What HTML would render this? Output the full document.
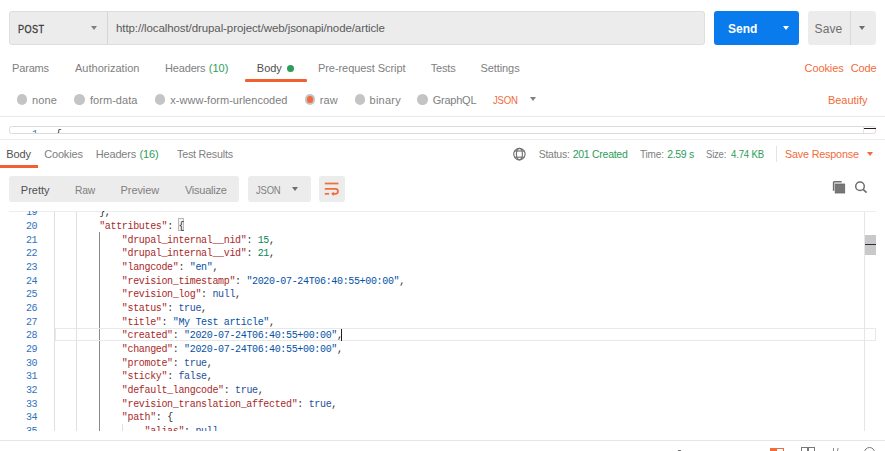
<!DOCTYPE html>
<html><head><meta charset="utf-8"><style>
*{box-sizing:border-box}
html,body{margin:0;padding:0}
body{width:885px;height:451px;overflow:hidden;background:#fff;position:relative;font-family:"Liberation Sans",sans-serif}
.tx{position:absolute;white-space:pre}
.a{position:absolute}
.tri{position:absolute;width:0;height:0;border-left:3.5px solid transparent;border-right:3.5px solid transparent;border-top:4px solid #808080}
.rad{position:absolute;width:10.6px;height:10.6px;border-radius:50%;background:#C3C4C5;top:94.1px}
.ln{position:absolute;width:50px;text-align:right;font:10px/10px "Liberation Mono",monospace;letter-spacing:-0.34px;color:#2F72C0;white-space:pre}
.cl{position:absolute;font:10px/10px "Liberation Mono",monospace;letter-spacing:-0.34px;color:#333;white-space:pre}
.hl{position:absolute;background:#E9E9E9}
</style></head><body>

<!-- request bar -->
<div class="a" style="left:9px;top:11px;width:696px;height:34px;background:#ECECEC;border:1px solid #DEDEDE;border-radius:3px"></div>
<div class="a" style="left:107px;top:12px;width:1px;height:32px;background:#D6D6D6"></div>
<div class="tri" style="left:90.8px;top:26.4px"></div>
<div class="a" style="left:714px;top:11px;width:85px;height:34px;background:#097BED;border-radius:3px"></div>
<div class="tri" style="left:782.5px;top:26.3px;border-top-color:#fff"></div>
<div class="a" style="left:808px;top:11px;width:68px;height:34px;background:#ECECEC;border-radius:3px"></div>
<div class="a" style="left:850px;top:11px;width:1px;height:34px;background:#DADADA"></div>
<div class="tri" style="left:859.2px;top:26.1px;border-top:4.7px solid #6E6E6E;border-left-width:3.4px;border-right-width:3.4px"></div>
<!-- tabs -->
<div class="a" style="left:244.8px;top:79.4px;width:61.8px;height:2.7px;background:#F06030;border-radius:1px"></div>
<div class="a" style="left:286.6px;top:64.8px;width:7.2px;height:7.2px;border-radius:50%;background:#2E9D57"></div>
<div class="hl" style="left:0;top:116px;width:885px;height:1px"></div>
<!-- radios -->
<div class="rad" style="left:16.9px"></div>
<div class="rad" style="left:74.2px"></div>
<div class="rad" style="left:154.7px"></div>
<div class="rad" style="left:304.8px"><div class="a" style="left:2.1px;top:2.1px;width:6.4px;height:6.4px;border-radius:50%;background:#F26B3A"></div></div>
<div class="rad" style="left:354.9px"></div>
<div class="rad" style="left:417.2px"></div>
<div class="tri" style="left:529.7px;top:97px"></div>
<!-- request editor strip -->
<div class="a" style="left:8.6px;top:125.7px;width:867.4px;height:7.9px;border:1.5px solid #DCDCDC;border-radius:2.5px;overflow:hidden">
<div class="ln" style="left:-22px;top:2.9px;width:50px">1</div>
<div class="cl" style="left:46.2px;top:3.6px">{</div>
<div class="a" style="left:853.5px;top:0;width:1px;height:6px;background:#E2E2E2"></div>
</div>
<div class="a" style="left:864.3px;top:127.6px;width:11.7px;height:1.6px;background:#2A1A1A"></div>
<div class="hl" style="left:0;top:139px;width:885px;height:1px;background:#ECECEC"></div>
<!-- response tabs -->
<div class="a" style="left:0;top:165.2px;width:38px;height:2.4px;background:#F06030"></div>
<svg class="a" style="left:512px;top:147px" width="15" height="15" viewBox="0 0 15 15">
 <g fill="none" stroke="#707070" stroke-width="1.15">
  <circle cx="7.4" cy="7.1" r="5.7"/>
  <ellipse cx="7.4" cy="7.1" rx="3.0" ry="5.7"/>
  <line x1="2.2" y1="4.0" x2="12.6" y2="4.0"/>
  <line x1="2.2" y1="10.2" x2="12.6" y2="10.2"/>
 </g>
</svg>
<div class="a" style="left:776px;top:145.5px;width:1px;height:16.5px;background:#E4E4E4"></div>
<div class="tri" style="left:866.5px;top:152.4px;border-top-color:#F26B3A;border-left-width:3px;border-right-width:3px;border-top-width:4.2px"></div>
<!-- toolbar -->
<div class="a" style="left:8.7px;top:176.2px;width:230px;height:25.5px;background:#ECECEC;border-radius:3px"></div>
<div class="a" style="left:247.5px;top:176.2px;width:63.2px;height:25.5px;background:#ECECEC;border-radius:3px"></div>
<div class="tri" style="left:292px;top:186.9px;border-top:4.5px solid #6E6E6E;border-left-width:3.4px;border-right-width:3.4px"></div>
<div class="a" style="left:319.3px;top:176.2px;width:25.6px;height:25.5px;background:#ECECEC;border-radius:3px"></div>
<svg class="a" style="left:319.3px;top:176.5px" width="26" height="26" viewBox="0 0 26 26">
 <g fill="none" stroke="#F26B3A" stroke-width="1.7">
  <line x1="5.8" y1="6.5" x2="19.4" y2="6.5"/>
  <path d="M5.8 11.8 H16.5 A2.5 2.5 0 0 1 16.5 16.8 H13.5"/>
  <line x1="5.8" y1="16.8" x2="10.1" y2="16.8"/>
 </g>
 <path d="M12.2 16.8 L14.8 14.5 L14.8 19.1 Z" fill="#F26B3A"/>
</svg>
<svg class="a" style="left:830px;top:178px" width="40" height="18" viewBox="0 0 40 18">
 <path d="M3.6 3.7 H11.7 M3.6 3.7 V12.7" stroke="#6E6E6E" stroke-width="1.5" fill="none"/>
 <rect x="5.2" y="6.0" width="9.5" height="9.0" fill="#777" stroke="#666" stroke-width="0.8"/>
 <circle cx="30" cy="8.3" r="4.3" stroke="#6E6E6E" stroke-width="1.5" fill="none"/>
 <line x1="33.1" y1="11.4" x2="36.6" y2="14.7" stroke="#6E6E6E" stroke-width="1.6"/>
</svg>
<!-- editor -->
<div class="a" style="left:9px;top:210.5px;width:867px;height:1.5px;background:#EDEDED"></div>
<div class="a" style="left:54px;top:212px;width:1px;height:219px;background:#E0E0E0"></div>
<div class="a" style="left:76.2px;top:212px;width:1px;height:219px;background:#E0E0E0"></div>
<div class="a" style="left:99.2px;top:232px;width:1.2px;height:199px;background:#8A8A8A"></div>
<div class="a" style="left:122.2px;top:424px;width:1px;height:7px;background:#E0E0E0"></div>
<div class="a" style="left:55px;top:328px;width:821px;height:13px;border:1px solid #E8E8E8"></div>
<div class="a" style="left:864.3px;top:212px;width:1px;height:219px;background:#E6E6E6"></div>
<div class="a" style="left:864.7px;top:234.5px;width:11.5px;height:20.3px;background:#C9C9C9"></div>
<div class="a" style="left:864.7px;top:243.7px;width:11.5px;height:1.6px;background:#2E2A4A"></div>
<div class="a" style="left:178px;top:218.3px;width:5.7px;height:13px;border:1px solid #B8B8B8;background:#F2F2F2"></div>
<div class="a" style="left:341.2px;top:328.5px;width:1.2px;height:12px;background:#2A1A1A"></div>
<div class="hl" style="left:0;top:440px;width:885px;height:1px;background:#E6E6E6"></div>
<!-- footer icons -->
<div class="a" style="left:770px;top:447.8px;width:13.8px;height:6px;border:1.5px solid #F26B3A;border-bottom:0"></div>
<div class="a" style="left:770px;top:447.8px;width:6.5px;height:6px;background:#F26B3A"></div>
<div class="a" style="left:801px;top:447.3px;width:13.8px;height:6px;border:1.5px solid #7A7A7A;border-bottom:0"></div>
<div class="a" style="left:807.2px;top:447.3px;width:1.5px;height:6px;background:#7A7A7A"></div>
<div class="a" style="left:832.7px;top:448px;width:1.3px;height:5px;background:#8A8A8A"></div>
<div class="a" style="left:836.5px;top:448px;width:1.3px;height:5px;background:#8A8A8A;transform:skewX(-15deg)"></div>
<div class="a" style="left:863.8px;top:447.3px;width:11.5px;height:11.5px;border:1.5px solid #7A7A7A;border-radius:50%"></div>
<div class="a" style="left:677.5px;top:449.5px;width:3px;height:2px;background:#777"></div>

<div class="tx" style="left:17.67px;top:23.50px;font-size:11px;line-height:11px;font-weight:normal;color:#3A3A3A;-webkit-text-stroke:0.3px #3A3A3A;letter-spacing:0.500px;transform:scaleX(0.8295);transform-origin:0 0">POST</div><div class="tx" style="left:116.00px;top:23.00px;font-size:11.5px;line-height:11.5px;font-weight:normal;color:#5A5A5A;letter-spacing:-0.096px">http://localhost/drupal-project/web/jsonapi/node/article</div><div class="tx" style="left:728.00px;top:22.60px;font-size:12px;line-height:12px;font-weight:bold;color:#FFFFFF;letter-spacing:0.033px">Send</div><div class="tx" style="left:814.60px;top:23.20px;font-size:12px;line-height:12px;font-weight:normal;color:#6E6E6E;letter-spacing:0.100px">Save</div><div class="tx" style="left:12.00px;top:63.00px;font-size:11px;line-height:11px;font-weight:normal;color:#808080;letter-spacing:-0.160px">Params</div><div class="tx" style="left:75.00px;top:63.00px;font-size:11px;line-height:11px;font-weight:normal;color:#808080;letter-spacing:0.017px">Authorization</div><div class="tx" style="left:165.10px;top:63.00px;font-size:11px;line-height:11px;font-weight:normal;color:#808080;letter-spacing:-0.183px">Headers</div><div class="tx" style="left:208.70px;top:63.00px;font-size:11px;line-height:11px;font-weight:normal;color:#2E9D57;letter-spacing:0.033px">(10)</div><div class="tx" style="left:256.80px;top:63.00px;font-size:11px;line-height:11px;font-weight:normal;color:#505050;letter-spacing:0.000px">Body</div><div class="tx" style="left:318.00px;top:63.00px;font-size:11px;line-height:11px;font-weight:normal;color:#808080;letter-spacing:-0.065px">Pre-request Script</div><div class="tx" style="left:430.70px;top:63.00px;font-size:11px;line-height:11px;font-weight:normal;color:#808080;letter-spacing:-0.150px">Tests</div><div class="tx" style="left:480.50px;top:63.00px;font-size:11px;line-height:11px;font-weight:normal;color:#808080;letter-spacing:-0.086px">Settings</div><div class="tx" style="left:804.60px;top:63.00px;font-size:11px;line-height:11px;font-weight:normal;color:#F26B3A;letter-spacing:-0.117px">Cookies</div><div class="tx" style="left:850.80px;top:63.00px;font-size:11px;line-height:11px;font-weight:normal;color:#F26B3A;letter-spacing:-0.167px">Code</div><div class="tx" style="left:31.90px;top:95.00px;font-size:11px;line-height:11px;font-weight:normal;color:#808080;letter-spacing:0.167px">none</div><div class="tx" style="left:89.90px;top:95.00px;font-size:11px;line-height:11px;font-weight:normal;color:#808080;letter-spacing:0.062px">form-data</div><div class="tx" style="left:170.30px;top:95.00px;font-size:11px;line-height:11px;font-weight:normal;color:#808080;letter-spacing:0.020px">x-www-form-urlencoded</div><div class="tx" style="left:319.80px;top:95.00px;font-size:11px;line-height:11px;font-weight:normal;color:#808080;letter-spacing:0.050px">raw</div><div class="tx" style="left:369.50px;top:95.00px;font-size:11px;line-height:11px;font-weight:normal;color:#808080;letter-spacing:0.260px">binary</div><div class="tx" style="left:432.70px;top:95.00px;font-size:11px;line-height:11px;font-weight:normal;color:#808080;letter-spacing:-0.233px">GraphQL</div><div class="tx" style="left:493.30px;top:95.00px;font-size:10.5px;line-height:10.5px;font-weight:normal;color:#F26B3A;letter-spacing:-0.200px;transform:scaleX(0.9129);transform-origin:0 0">JSON</div><div class="tx" style="left:827.90px;top:95.00px;font-size:11px;line-height:11px;font-weight:normal;color:#F26B3A;letter-spacing:-0.014px">Beautify</div><div class="tx" style="left:6.30px;top:148.60px;font-size:11px;line-height:11px;font-weight:normal;color:#505050;letter-spacing:-0.133px">Body</div><div class="tx" style="left:44.20px;top:148.60px;font-size:11px;line-height:11px;font-weight:normal;color:#808080;letter-spacing:-0.167px">Cookies</div><div class="tx" style="left:95.80px;top:148.60px;font-size:11px;line-height:11px;font-weight:normal;color:#808080;letter-spacing:-0.183px">Headers</div><div class="tx" style="left:139.60px;top:148.60px;font-size:11px;line-height:11px;font-weight:normal;color:#2E9D57;letter-spacing:-0.200px">(16)</div><div class="tx" style="left:177.00px;top:148.60px;font-size:11px;line-height:11px;font-weight:normal;color:#808080;letter-spacing:-0.200px;transform:scaleX(0.9706);transform-origin:0 0">Test Results</div><div class="tx" style="left:538.70px;top:148.50px;font-size:10.5px;line-height:10.5px;font-weight:normal;color:#808080;letter-spacing:-0.250px">Status:</div><div class="tx" style="left:572.70px;top:148.50px;font-size:10.5px;line-height:10.5px;font-weight:normal;color:#2E9D57;letter-spacing:-0.270px">201 Created</div><div class="tx" style="left:640.30px;top:148.50px;font-size:10.5px;line-height:10.5px;font-weight:normal;color:#808080;letter-spacing:-0.200px;transform:scaleX(0.9545);transform-origin:0 0">Time:</div><div class="tx" style="left:667.30px;top:148.50px;font-size:10.5px;line-height:10.5px;font-weight:normal;color:#2E9D57;letter-spacing:-0.340px">2.59 s</div><div class="tx" style="left:706.10px;top:148.50px;font-size:10.5px;line-height:10.5px;font-weight:normal;color:#808080;letter-spacing:-0.200px;transform:scaleX(0.9009);transform-origin:0 0">Size:</div><div class="tx" style="left:730.90px;top:148.50px;font-size:10.5px;line-height:10.5px;font-weight:normal;color:#2E9D57;letter-spacing:-0.200px;transform:scaleX(0.9162);transform-origin:0 0">4.74 KB</div><div class="tx" style="left:785.26px;top:148.50px;font-size:11.5px;line-height:11.5px;font-weight:normal;color:#F26B3A;letter-spacing:-0.200px;transform:scaleX(0.9381);transform-origin:0 0">Save Response</div><div class="tx" style="left:20.80px;top:184.50px;font-size:11px;line-height:11px;font-weight:normal;color:#505050;letter-spacing:-0.000px">Pretty</div><div class="tx" style="left:75.36px;top:184.50px;font-size:11px;line-height:11px;font-weight:normal;color:#808080;letter-spacing:-0.200px;transform:scaleX(0.9369);transform-origin:0 0">Raw</div><div class="tx" style="left:120.60px;top:184.50px;font-size:11px;line-height:11px;font-weight:normal;color:#808080;letter-spacing:-0.100px">Preview</div><div class="tx" style="left:184.90px;top:184.50px;font-size:11px;line-height:11px;font-weight:normal;color:#808080;letter-spacing:-0.238px">Visualize</div><div class="tx" style="left:256.00px;top:184.50px;font-size:10.5px;line-height:10.5px;font-weight:normal;color:#808080;letter-spacing:-0.200px;transform:scaleX(0.9015);transform-origin:0 0">JSON</div>
<div class="a" style="left:0;top:211px;width:876px;height:220px;overflow:hidden">
<div class="a" style="left:0;top:-211px;width:876px;height:451px">
<div class="ln" style="top:208.33px;left:-12.80px">19</div><div class="cl" style="top:208.33px;left:53.90px">        <span style="color:#333333">},</span></div><div class="ln" style="top:222.00px;left:-12.80px">20</div><div class="cl" style="top:222.00px;left:53.90px">        <span style="color:#A82A2A">&quot;attributes&quot;</span><span style="color:#333333">: </span><span style="color:#333333">{</span></div><div class="ln" style="top:235.67px;left:-12.80px">21</div><div class="cl" style="top:235.67px;left:53.90px">            <span style="color:#A82A2A">&quot;drupal_internal__nid&quot;</span><span style="color:#333333">: </span><span style="color:#098658">15</span><span style="color:#333333">,</span></div><div class="ln" style="top:249.33px;left:-12.80px">22</div><div class="cl" style="top:249.33px;left:53.90px">            <span style="color:#A82A2A">&quot;drupal_internal__vid&quot;</span><span style="color:#333333">: </span><span style="color:#098658">21</span><span style="color:#333333">,</span></div><div class="ln" style="top:263.00px;left:-12.80px">23</div><div class="cl" style="top:263.00px;left:53.90px">            <span style="color:#A82A2A">&quot;langcode&quot;</span><span style="color:#333333">: </span><span style="color:#0451A5">&quot;en&quot;</span><span style="color:#333333">,</span></div><div class="ln" style="top:276.67px;left:-12.80px">24</div><div class="cl" style="top:276.67px;left:53.90px">            <span style="color:#A82A2A">&quot;revision_timestamp&quot;</span><span style="color:#333333">: </span><span style="color:#0451A5">&quot;2020-07-24T06:40:55+00:00&quot;</span><span style="color:#333333">,</span></div><div class="ln" style="top:290.33px;left:-12.80px">25</div><div class="cl" style="top:290.33px;left:53.90px">            <span style="color:#A82A2A">&quot;revision_log&quot;</span><span style="color:#333333">: </span><span style="color:#1F4E9E">null</span><span style="color:#333333">,</span></div><div class="ln" style="top:304.00px;left:-12.80px">26</div><div class="cl" style="top:304.00px;left:53.90px">            <span style="color:#A82A2A">&quot;status&quot;</span><span style="color:#333333">: </span><span style="color:#1F4E9E">true</span><span style="color:#333333">,</span></div><div class="ln" style="top:317.67px;left:-12.80px">27</div><div class="cl" style="top:317.67px;left:53.90px">            <span style="color:#A82A2A">&quot;title&quot;</span><span style="color:#333333">: </span><span style="color:#0451A5">&quot;My Test article&quot;</span><span style="color:#333333">,</span></div><div class="ln" style="top:331.34px;left:-12.80px">28</div><div class="cl" style="top:331.34px;left:53.90px">            <span style="color:#A82A2A">&quot;created&quot;</span><span style="color:#333333">: </span><span style="color:#0451A5">&quot;2020-07-24T06:40:55+00:00&quot;</span><span style="color:#333333">,</span></div><div class="ln" style="top:345.00px;left:-12.80px">29</div><div class="cl" style="top:345.00px;left:53.90px">            <span style="color:#A82A2A">&quot;changed&quot;</span><span style="color:#333333">: </span><span style="color:#0451A5">&quot;2020-07-24T06:40:55+00:00&quot;</span><span style="color:#333333">,</span></div><div class="ln" style="top:358.67px;left:-12.80px">30</div><div class="cl" style="top:358.67px;left:53.90px">            <span style="color:#A82A2A">&quot;promote&quot;</span><span style="color:#333333">: </span><span style="color:#1F4E9E">true</span><span style="color:#333333">,</span></div><div class="ln" style="top:372.34px;left:-12.80px">31</div><div class="cl" style="top:372.34px;left:53.90px">            <span style="color:#A82A2A">&quot;sticky&quot;</span><span style="color:#333333">: </span><span style="color:#1F4E9E">false</span><span style="color:#333333">,</span></div><div class="ln" style="top:386.00px;left:-12.80px">32</div><div class="cl" style="top:386.00px;left:53.90px">            <span style="color:#A82A2A">&quot;default_langcode&quot;</span><span style="color:#333333">: </span><span style="color:#1F4E9E">true</span><span style="color:#333333">,</span></div><div class="ln" style="top:399.67px;left:-12.80px">33</div><div class="cl" style="top:399.67px;left:53.90px">            <span style="color:#A82A2A">&quot;revision_translation_affected&quot;</span><span style="color:#333333">: </span><span style="color:#1F4E9E">true</span><span style="color:#333333">,</span></div><div class="ln" style="top:413.34px;left:-12.80px">34</div><div class="cl" style="top:413.34px;left:53.90px">            <span style="color:#A82A2A">&quot;path&quot;</span><span style="color:#333333">: </span><span style="color:#333333">{</span></div><div class="ln" style="top:427.00px;left:-12.80px">35</div><div class="cl" style="top:427.00px;left:53.90px">                <span style="color:#A82A2A">&quot;alias&quot;</span><span style="color:#333333">: </span><span style="color:#1F4E9E">null</span></div>
</div></div>
</body></html>
